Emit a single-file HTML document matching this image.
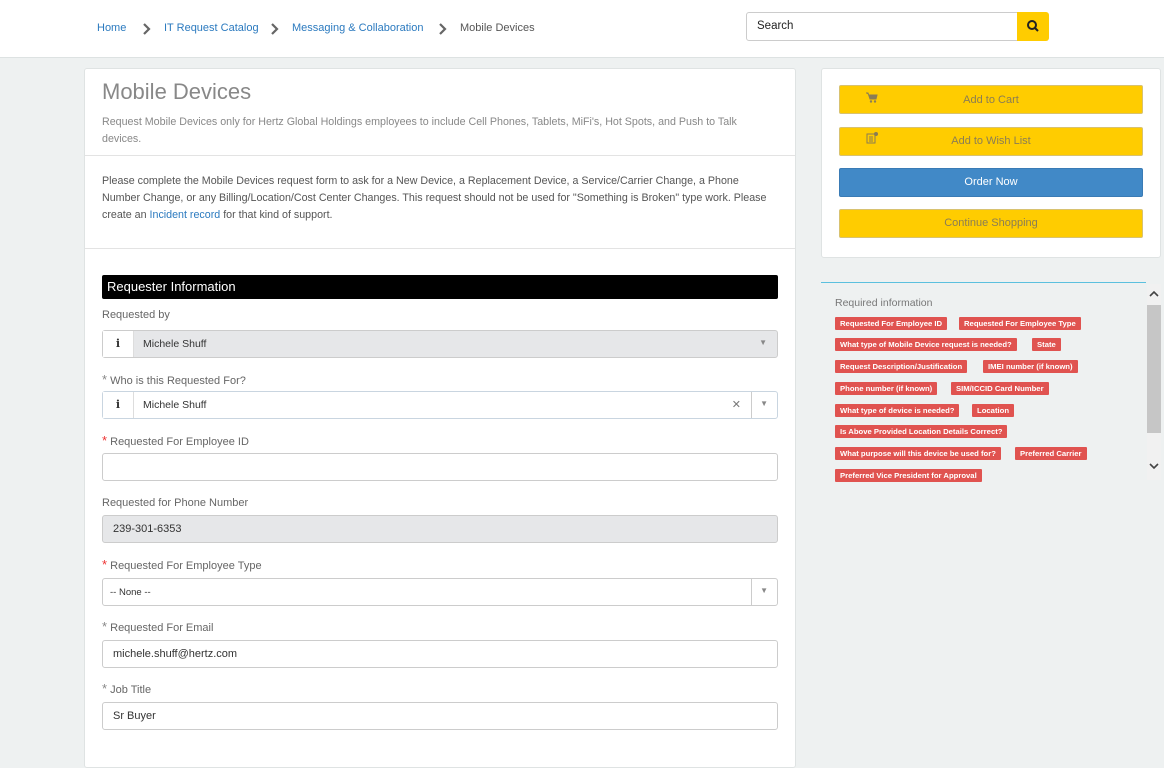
<!DOCTYPE html>
<html><head><meta charset="utf-8"><style>
*{box-sizing:border-box;margin:0;padding:0}
body{width:1164px;height:744px;overflow:hidden;background:#eef1f1;font-family:"Liberation Sans",sans-serif;position:relative;color:#333}
.a{position:absolute}
.hdr{left:0;top:0;width:1164px;height:58px;background:#fff;border-bottom:1px solid #dde2e2}
.bc{top:22px;font-size:11px;color:#2b7abf}
.sep{top:23px}
.panel{background:#fff;border:1px solid #dfe3e3;border-radius:3px}
.lbl{font-size:11px;color:#666}
.inp{border:1px solid #ccc;border-radius:3px;background:#fff;height:28px;font-size:11px;padding:7px 10px;color:#333}
.btn{left:839px;width:304px;height:29px;border-radius:2px;background:#ffcc00;border:1px solid #d8c270;text-align:center;font-size:11px;line-height:27px;color:#8a7d55}
.tag{position:absolute;height:13px;background:#e05350;color:#fff;font-size:7.7px;font-weight:bold;line-height:13px;padding:0 5px;border-radius:1px;white-space:nowrap}
.req{color:#e33;font-size:13px}
.st{color:#888;font-size:13px}
.ic{position:absolute;left:0;top:0;width:31px;height:100%;text-align:center;font-weight:bold;font-family:"DejaVu Serif",serif;font-size:11px;line-height:26px;border-right:1px solid #ddd;background:#fff}
</style></head><body>
<div class="a hdr"></div>
<div class="a bc" style="left:97px">Home</div>
<svg class="a sep" style="left:142px" width="10" height="12"><path d="M2 1l5 5-5 5" fill="none" stroke="#666" stroke-width="2.2"/></svg>
<div class="a bc" style="left:164px">IT Request Catalog</div>
<svg class="a sep" style="left:270px" width="10" height="12"><path d="M2 1l5 5-5 5" fill="none" stroke="#666" stroke-width="2.2"/></svg>
<div class="a bc" style="left:292px">Messaging &amp; Collaboration</div>
<svg class="a sep" style="left:438px" width="10" height="12"><path d="M2 1l5 5-5 5" fill="none" stroke="#666" stroke-width="2.2"/></svg>
<div class="a bc" style="left:460px;color:#555">Mobile Devices</div>
<div class="a" style="left:746px;top:12px;width:272px;height:29px;border:1px solid #ccc;border-radius:3px 0 0 3px;background:#fff;font-size:11.5px;padding:7px 10px;color:#222">Search</div>
<div class="a" style="left:1017px;top:12px;width:32px;height:29px;background:#ffcc00;border-radius:0 3px 3px 0"><svg width="32" height="29"><circle cx="15" cy="13" r="4" fill="none" stroke="#222" stroke-width="2"/><line x1="18" y1="16" x2="21" y2="19" stroke="#222" stroke-width="2"/></svg></div>

<div class="a panel" style="left:84px;top:68px;width:712px;height:700px"></div>
<div class="a" style="left:102px;top:79px;font-size:22px;color:#888">Mobile Devices</div>
<div class="a" style="left:102px;top:114px;width:670px;font-size:10.7px;line-height:17px;color:#888">Request Mobile Devices only for Hertz Global Holdings employees to include Cell Phones, Tablets, MiFi's, Hot Spots, and Push to Talk devices.</div>
<div class="a" style="left:85px;top:155px;width:710px;height:1px;background:#e3e3e3"></div>
<div class="a" style="left:102px;top:173px;width:670px;font-size:10.7px;line-height:17px;color:#555">Please complete the Mobile Devices request form to ask for a New Device, a Replacement Device, a Service/Carrier Change, a Phone Number Change, or any Billing/Location/Cost Center Changes. This request should not be used for "Something is Broken" type work. Please create an <span style="color:#2b7abf">Incident record</span> for that kind of support.</div>
<div class="a" style="left:85px;top:248px;width:710px;height:1px;background:#e3e3e3"></div>
<div class="a" style="left:102px;top:275px;width:676px;height:24px;background:#000;color:#fff;font-size:13px;padding:4px 5px;border-radius:2px">Requester Information</div>

<div class="a lbl" style="left:102px;top:309px">Requested by</div>
<div class="a inp" style="left:102px;top:330px;width:676px;background:#e6e7e9;padding-left:40px;font-size:10.5px">Michele Shuff<span style="position:absolute;right:10px;top:7px;font-size:8px;color:#888">▼</span><div class="ic">i</div></div>
<div class="a lbl" style="left:102px;top:372px"><span class="st">*</span> Who is this Requested For?</div>
<div class="a inp" style="left:102px;top:391px;width:676px;padding-left:40px;border-color:#c9d5e0;font-size:10.5px">Michele Shuff<span style="position:absolute;right:36px;top:6px;font-size:11px;color:#777">✕</span><span style="position:absolute;right:25px;top:0;width:1px;height:26px;background:#ccc"></span><span style="position:absolute;right:9px;top:7px;font-size:8px;color:#888">▼</span><div class="ic">i</div></div>
<div class="a lbl" style="left:102px;top:433px"><span class="req">*</span> Requested For Employee ID</div>
<div class="a inp" style="left:102px;top:453px;width:676px"></div>
<div class="a lbl" style="left:102px;top:497px">Requested for Phone Number</div>
<div class="a inp" style="left:102px;top:515px;width:676px;background:#e6e7e9">239-301-6353</div>
<div class="a lbl" style="left:102px;top:557px"><span class="req">*</span> Requested For Employee Type</div>
<div class="a inp" style="left:102px;top:578px;width:676px;font-size:9.5px;padding-left:7px;padding-top:8px">-- None --<span style="position:absolute;right:25px;top:0;width:1px;height:26px;background:#ccc"></span><span style="position:absolute;right:9px;top:7px;font-size:8px;color:#888">▼</span></div>
<div class="a lbl" style="left:102px;top:619px"><span class="st">*</span> Requested For Email</div>
<div class="a inp" style="left:102px;top:640px;width:676px">michele.shuff@hertz.com</div>
<div class="a lbl" style="left:102px;top:681px"><span class="st">*</span> Job Title</div>
<div class="a inp" style="left:102px;top:702px;width:676px">Sr Buyer</div>

<div class="a panel" style="left:821px;top:68px;width:340px;height:190px"></div>
<div class="a btn" style="top:85px;line-height:29px">Add to Cart<svg style="position:absolute;left:26px;top:6px" width="12" height="11"><path d="M0 1h2l2 6h6l1-4H3" fill="#8a7d55" stroke="#8a7d55"/><circle cx="5" cy="9.5" r="1.2" fill="#8a7d55"/><circle cx="9" cy="9.5" r="1.2" fill="#8a7d55"/></svg></div>
<div class="a btn" style="top:127px;line-height:27px">Add to Wish List<svg style="position:absolute;left:26px;top:4px" width="12" height="12"><rect x="1" y="2" width="8" height="9" fill="none" stroke="#8a7d55"/><path d="M3 5h4M3 7h4M3 9h4" stroke="#8a7d55"/><circle cx="10" cy="2" r="2" fill="#8a7d55"/></svg></div>
<div class="a btn" style="top:168px;background:#4189c7;border-color:#3a7bb5;color:#fff">Order Now</div>
<div class="a btn" style="top:209px">Continue Shopping</div>

<div class="a" style="left:821px;top:282px;width:325px;height:1px;background:#5bc0de"></div>
<div class="a" style="left:1147px;top:284px;width:14px;height:196px;background:#f1f1f1"></div>
<div class="a" style="left:1147px;top:305px;width:14px;height:128px;background:#c6c6c6"></div>
<svg class="a" style="left:1148px;top:290px" width="12" height="8"><path d="M2 6l4-4 4 4" fill="none" stroke="#444" stroke-width="1.6"/></svg>
<svg class="a" style="left:1148px;top:462px" width="12" height="8"><path d="M2 2l4 4 4-4" fill="none" stroke="#444" stroke-width="1.6"/></svg>
<div class="a" style="left:835px;top:297px;font-size:10.5px;color:#777">Required information</div>
<div class="tag" style="left:835px;top:317px">Requested For Employee ID</div>
<div class="tag" style="left:959px;top:317px">Requested For Employee Type</div>
<div class="tag" style="left:835px;top:338px">What type of Mobile Device request is needed?</div>
<div class="tag" style="left:1032px;top:338px">State</div>
<div class="tag" style="left:835px;top:360px">Request Description/Justification</div>
<div class="tag" style="left:983px;top:360px">IMEI number (if known)</div>
<div class="tag" style="left:835px;top:382px">Phone number (if known)</div>
<div class="tag" style="left:951px;top:382px">SIM/ICCID Card Number</div>
<div class="tag" style="left:835px;top:404px">What type of device is needed?</div>
<div class="tag" style="left:972px;top:404px">Location</div>
<div class="tag" style="left:835px;top:425px">Is Above Provided Location Details Correct?</div>
<div class="tag" style="left:835px;top:447px">What purpose will this device be used for?</div>
<div class="tag" style="left:1015px;top:447px">Preferred Carrier</div>
<div class="tag" style="left:835px;top:469px">Preferred Vice President for Approval</div>
</body></html>
